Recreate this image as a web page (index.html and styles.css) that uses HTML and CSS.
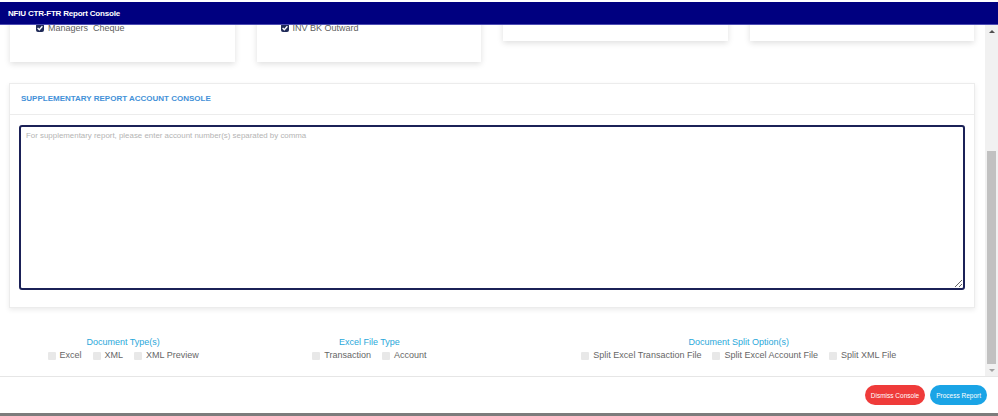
FILE: index.html
```html
<!DOCTYPE html>
<html lang="en">
<head>
<meta charset="utf-8">
<title>NFIU CTR-FTR Report Console</title>
<link rel="stylesheet" href="styles.css">
</head>
<body>
<div class="modal">
  <header class="modal-header">NFIU CTR-FTR Report Console</header>
  <div class="viewport">
    <div class="scroll">
      <div class="content">
        <div class="cards">
          <div class="card">
            <label class="item"><span class="cb cb-on"><svg viewBox="0 0 8 8"><path d="M1.6 4.1 3.3 5.7 6.4 2.3" fill="none" stroke="#fff" stroke-width="1.4"/></svg></span>Cheque Withdrawal</label>
            <label class="item"><span class="cb cb-on"><svg viewBox="0 0 8 8"><path d="M1.6 4.1 3.3 5.7 6.4 2.3" fill="none" stroke="#fff" stroke-width="1.4"/></svg></span>Managers&nbsp; Cheque</label>
          </div>
          <div class="card">
            <label class="item"><span class="cb cb-on"><svg viewBox="0 0 8 8"><path d="M1.6 4.1 3.3 5.7 6.4 2.3" fill="none" stroke="#fff" stroke-width="1.4"/></svg></span>INV BK Inward</label>
            <label class="item"><span class="cb cb-on"><svg viewBox="0 0 8 8"><path d="M1.6 4.1 3.3 5.7 6.4 2.3" fill="none" stroke="#fff" stroke-width="1.4"/></svg></span>INV BK Outward</label>
          </div>
          <div class="card">
            <label class="item"><span class="cb cb-on"><svg viewBox="0 0 8 8"><path d="M1.6 4.1 3.3 5.7 6.4 2.3" fill="none" stroke="#fff" stroke-width="1.4"/></svg></span>EUR</label>
          </div>
          <div class="card">
            <label class="item"><span class="cb cb-on"><svg viewBox="0 0 8 8"><path d="M1.6 4.1 3.3 5.7 6.4 2.3" fill="none" stroke="#fff" stroke-width="1.4"/></svg></span>Others</label>
          </div>
        </div>

        <section class="supp">
          <div class="supp-header">SUPPLEMENTARY REPORT ACCOUNT CONSOLE</div>
          <div class="supp-body">
            <textarea class="supp-input" placeholder="For supplementary report, please enter account number(s) separated by comma"></textarea>
          </div>
        </section>

        <div class="options">
          <div class="opt-group">
            <div class="opt-title">Document Type(s)</div>
            <div class="opt-row">
              <label class="opt"><span class="cb cb-off"></span>Excel</label>
              <label class="opt"><span class="cb cb-off"></span>XML</label>
              <label class="opt"><span class="cb cb-off"></span>XML Preview</label>
            </div>
          </div>
          <div class="opt-group">
            <div class="opt-title">Excel File Type</div>
            <div class="opt-row">
              <label class="opt"><span class="cb cb-off"></span>Transaction</label>
              <label class="opt"><span class="cb cb-off"></span>Account</label>
            </div>
          </div>
          <div class="opt-group">
            <div class="opt-title">Document Split Option(s)</div>
            <div class="opt-row">
              <label class="opt"><span class="cb cb-off"></span>Split Excel Transaction File</label>
              <label class="opt"><span class="cb cb-off"></span>Split Excel Account File</label>
              <label class="opt"><span class="cb cb-off"></span>Split XML File</label>
            </div>
          </div>
        </div>
      </div>
    </div>
    <div class="sbar">
      <div class="sbar-btn"><span class="tri-up"></span></div>
      <div class="sbar-track"><div class="sbar-thumb"></div></div>
      <div class="sbar-btn sbar-btn-down"><span class="tri-down"></span></div>
    </div>
  </div>
  <footer class="modal-footer">
    <button class="btn btn-red">Dismiss Console</button>
    <button class="btn btn-blue">Process Report</button>
  </footer>
  <div class="bottom-bar"></div>
</div>
</body>
</html>
```

FILE: styles.css
```css
* { box-sizing: border-box; }
html, body { margin: 0; padding: 0; }
body {
  width: 998px;
  height: 416px;
  overflow: hidden;
  background: #fff;
  font-family: "Liberation Sans", Arial, sans-serif;
  color: #555;
}
.modal {
  height: 416px;
  display: flex;
  flex-direction: column;
  padding-top: 2px;
}
.modal-header {
  height: 23px;
  flex: none;
  background: #000080;
  border-bottom: 1px solid #4d4db3;
  color: #fff;
  font-weight: bold;
  font-size: 8px;
  letter-spacing: -0.2px;
  padding-left: 8px;
  display: flex;
  align-items: center;
}
.viewport {
  flex: 1;
  min-height: 0;
  display: flex;
}
.scroll {
  flex: 1;
  min-width: 0;
  overflow: hidden;
  display: flex;
  flex-direction: column;
  justify-content: flex-end;
}
.content {
  flex: none;
  padding: 0 0 14px;
}
.cards {
  display: grid;
  grid-template-columns: repeat(4, 1fr);
  column-gap: 22px;
  align-items: end;
  margin: 0 11px 0 10px;
}
.card {
  background: #fff;
  box-shadow: 0 2px 6px rgba(0, 0, 0, 0.13);
  padding: 4px 12px 24px 26px;
}
.card:nth-child(2) { padding-left: 24px; }
.card:nth-child(n+3) {
  margin-bottom: 21px;
  padding-bottom: 16px;
}
.item {
  display: flex;
  align-items: center;
  height: 21px;
  font-size: 9px;
  color: #5e5e5e;
}
.cb {
  display: inline-block;
  width: 8px;
  height: 8px;
  flex: none;
  margin-right: 4px;
}
.cb-on {
  background: #1f2a58;
  border-radius: 2px;
}
.cb-on svg { display: block; width: 8px; height: 8px; }
.cb-off {
  background: #e8e8e8;
  border-radius: 1px;
}
.supp {
  margin: 21px 10px 0 9px;
  border: 1px solid #ececec;
  background: #fff;
  box-shadow: 0 2px 5px rgba(0, 0, 0, 0.08);
}
.supp-header {
  height: 31px;
  border-bottom: 1px solid #ececec;
  font-size: 8px;
  font-weight: bold;
  color: #4391d8;
  display: flex;
  align-items: center;
  padding: 0 0 2px 11px;
}
.supp-body {
  padding: 10px 9px 17px 9px;
}
.supp-input {
  display: block;
  width: 100%;
  height: 165px;
  border: 2px solid #1b2157;
  border-radius: 3px;
  padding: 4px 5px;
  font-family: "Liberation Sans", Arial, sans-serif;
  font-size: 7.9px;
  line-height: 10px;
  color: #555;
  resize: both;
  outline: none;
}
.supp-input::placeholder { color: #b4b4b4; }
.options {
  display: grid;
  grid-template-columns: 1fr 1fr 2fr;
  margin-top: 28px;
}
.opt-group { text-align: center; }
.opt-title {
  font-size: 9px;
  line-height: 13px;
  color: #2aa8da;
}
.opt-row {
  display: flex;
  justify-content: center;
  column-gap: 11px;
  line-height: 13px;
}
.opt {
  display: flex;
  align-items: center;
  font-size: 9px;
  color: #666;
}
.sbar {
  width: 13px;
  flex: none;
  background: #f1f1f1;
  display: flex;
  flex-direction: column;
}
.sbar-btn {
  height: 13px;
  flex: none;
  display: flex;
  align-items: center;
  justify-content: center;
}
.sbar-btn-down { height: 12px; }
.tri-up, .tri-down {
  width: 0;
  height: 0;
  border-left: 3px solid transparent;
  border-right: 3px solid transparent;
}
.tri-up { border-bottom: 3px solid #505050; }
.tri-down { border-top: 3px solid #a3a3a3; }
.sbar-track {
  flex: 1;
  display: flex;
  flex-direction: column;
  justify-content: flex-end;
  padding: 0 2px;
}
.sbar-thumb {
  height: 213px;
  background: #c1c1c1;
}
.modal-footer {
  height: 37px;
  flex: none;
  border-top: 1px solid #e6e6e6;
  display: flex;
  align-items: center;
  justify-content: flex-end;
  column-gap: 5px;
  padding-right: 11px;
}
.btn {
  height: 20px;
  border: none;
  border-radius: 10px;
  padding: 0 6px;
  color: #fff;
  font-family: "Liberation Sans", Arial, sans-serif;
  font-size: 6.5px;
}
.btn-red { background: #ef3b3a; }
.btn-blue { background: #1aa4e6; }
.bottom-bar {
  height: 3px;
  flex: none;
  background: #7c7c7c;
}
```
